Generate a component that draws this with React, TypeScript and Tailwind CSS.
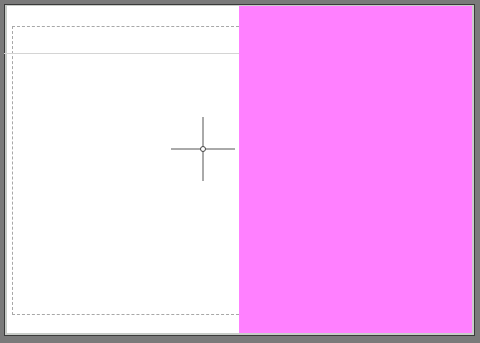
export default function App() {
  return (
    <div className="w-[480px] h-[343px] bg-[#7a7a7a] pt-1 pl-1">
      <div className="w-[471px] h-[332px] border border-[#3a3a3a] bg-[#3a3a3a]">
        <div className="flex h-full border-l-2 border-r-2 border-t border-b-2 border-[#c8ccc8]">
          <div className="relative w-[232px] h-full bg-white pt-5 pl-[5px] pb-[18px]">
            <div className="h-full border border-r-0 border-dashed border-[#a8a8a8]" />
            <div className="absolute left-[-3px] right-0 top-[47px] h-px bg-[#d4d4d4]" />
            <svg
              className="absolute left-[164px] top-[111px]"
              width="64"
              height="64"
              viewBox="0 0 64 64"
            >
              <line x1="0" y1="32" x2="64" y2="32" stroke="#555" strokeWidth="1" />
              <line x1="32" y1="0" x2="32" y2="64" stroke="#555" strokeWidth="1" />
              <circle cx="32" cy="32" r="2.5" fill="white" stroke="#444" strokeWidth="1" />
            </svg>
          </div>
          <div className="flex-1 h-full bg-[#ff80ff]" />
        </div>
      </div>
    </div>
  );
}
